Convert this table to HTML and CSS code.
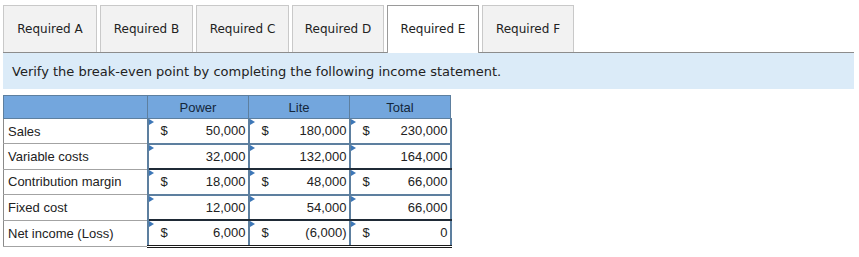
FILE: index.html
```html
<!DOCTYPE html>
<html>
<head>
<meta charset="utf-8">
<link rel="stylesheet" href="styles.css">
</head>
<body>
<div class="page">
  <div class="tabs">
    <div class="tab w94">Required A</div>
    <div class="tab">Required B</div>
    <div class="tab">Required C</div>
    <div class="tab w92">Required D</div>
    <div class="tab w92 active">Required E</div>
    <div class="tab w92">Required F</div>
  </div>
  <div class="prompt">Verify the break-even point by completing the following income statement.</div>
  <table class="stmt">
    <colgroup>
      <col class="c-label"><col class="c-val"><col class="c-val"><col class="c-val">
    </colgroup>
    <thead>
      <tr><th></th><th>Power</th><th>Lite</th><th>Total</th></tr>
    </thead>
    <tbody>
      <tr>
        <td class="label">Sales</td>
        <td class="val"><span class="flag"></span><span class="cur">$</span><span class="num">50,000</span></td>
        <td class="val"><span class="flag"></span><span class="cur">$</span><span class="num">180,000</span></td>
        <td class="val"><span class="flag"></span><span class="cur">$</span><span class="num">230,000</span></td>
      </tr>
      <tr class="subtotal">
        <td class="label">Variable costs</td>
        <td class="val"><span class="flag"></span><span class="cur"></span><span class="num">32,000</span></td>
        <td class="val"><span class="flag"></span><span class="cur"></span><span class="num">132,000</span></td>
        <td class="val"><span class="flag"></span><span class="cur"></span><span class="num">164,000</span></td>
      </tr>
      <tr>
        <td class="label">Contribution margin</td>
        <td class="val"><span class="flag"></span><span class="cur">$</span><span class="num">18,000</span></td>
        <td class="val"><span class="flag"></span><span class="cur">$</span><span class="num">48,000</span></td>
        <td class="val"><span class="flag"></span><span class="cur">$</span><span class="num">66,000</span></td>
      </tr>
      <tr class="subtotal">
        <td class="label">Fixed cost</td>
        <td class="val"><span class="flag"></span><span class="cur"></span><span class="num">12,000</span></td>
        <td class="val"><span class="flag"></span><span class="cur"></span><span class="num">54,000</span></td>
        <td class="val"><span class="flag"></span><span class="cur"></span><span class="num">66,000</span></td>
      </tr>
      <tr class="total">
        <td class="label">Net income (Loss)</td>
        <td class="val"><span class="flag"></span><span class="cur">$</span><span class="num">6,000</span></td>
        <td class="val"><span class="flag"></span><span class="cur">$</span><span class="num">(6,000)</span></td>
        <td class="val"><span class="flag"></span><span class="cur">$</span><span class="num">0</span></td>
      </tr>
    </tbody>
  </table>
</div>
</body>
</html>
```
FILE: styles.css
```css
html, body {
  margin: 0;
  padding: 0;
  background: #ffffff;
}

.page {
  padding: 5px 5px 0 3px;
  width: 851px;
}

/* tab strip */
.tabs {
  display: flex;
  gap: 3px;
  height: 47px;
  border-bottom: 1px solid #8c8c8c;
}

.tab {
  box-sizing: border-box;
  width: 93px;
  height: 47px;
  display: flex;
  align-items: center;
  justify-content: center;
  background: #f2f2f2;
  border: 1px solid #c9c9c9;
  border-bottom: none;
  font-family: "DejaVu Sans", Verdana, sans-serif;
  font-size: 12px;
  color: #222222;
}

.tab.w94 { width: 94px; }
.tab.w92 { width: 92px; }

.tab.active {
  background: #ffffff;
  border-color: #9a9a9a;
  height: 48px;
  padding-bottom: 1px;
  margin-bottom: -1px;
}

/* instruction bar */
.prompt {
  height: 36px;
  display: flex;
  align-items: center;
  padding-left: 9px;
  background: #dbebf8;
  font-family: "DejaVu Sans", Verdana, sans-serif;
  font-size: 13px;
  color: #222222;
}

/* income statement */
.stmt {
  margin-top: 6px;
  border-collapse: collapse;
  font-family: "Liberation Sans", Arial, sans-serif;
  font-size: 13px;
  color: #222222;
  table-layout: fixed;
  width: 448px;
}

.c-label { width: 144px; }
.c-val { width: 101px; }

.stmt thead th {
  height: 22px;
  padding: 0;
  background: #73a6dd;
  border: 1px solid #5d7f9f;
  font-weight: normal;
  color: #14263b;
  text-align: center;
}

.stmt td {
  height: 23.5px;
  padding: 0;
}

.stmt td.label {
  padding-left: 4px;
  border: 1px solid #a3a3a3;
  border-right: 2px solid #5d7f9f;
  border-left-color: #8a8a8a;
}

.stmt td.val {
  position: relative;
  border-left: 2px solid #5d7f9f;
  border-right: 2px solid #5d7f9f;
  border-bottom: 2px solid #5d7f9f;
  border-top: 1px solid #5d7f9f;
}

.val {
  white-space: nowrap;
}

.val .cur {
  display: inline-block;
  width: 28px;
  padding-left: 12px;
  box-sizing: border-box;
}

.val .num {
  display: inline-block;
  width: 69px;
  text-align: right;
}

/* input marker in the corner of each entry cell */
.flag {
  position: absolute;
  left: 0;
  top: 0;
  width: 0;
  height: 0;
  border-left: 5px solid #3d77b7;
  border-top: 3px solid transparent;
  border-bottom: 3px solid transparent;
}

.stmt tr.subtotal td.val {
  border-bottom: 2px solid #1f2a36;
}

.stmt tr.total td.val {
  border-bottom: 3px double #1a1a1a;
}

.stmt tr.total td.label {
  border-bottom: 1px solid #a3a3a3;
}
```
